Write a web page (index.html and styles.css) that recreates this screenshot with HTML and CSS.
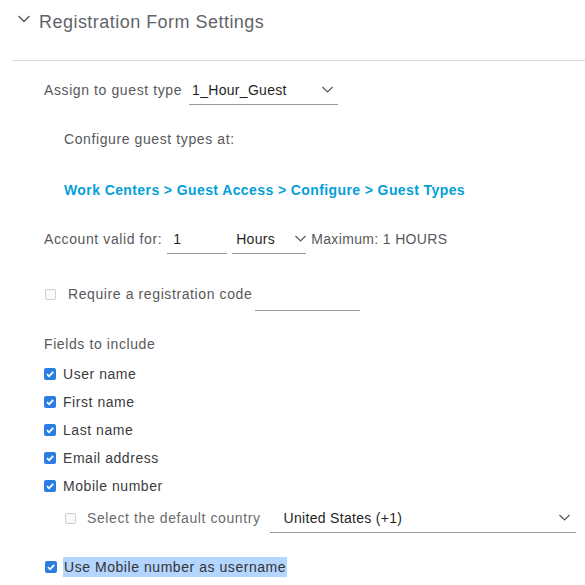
FILE: index.html
```html
<!DOCTYPE html>
<html>
<head>
<meta charset="utf-8">
<link rel="stylesheet" href="styles.css">
</head>
<body>
<div class="panel">
  <div class="header">
    <svg class="caret" width="12" height="8" viewBox="0 0 12 8"><path d="M0.5 1 L6 6.5 L11.5 1" fill="none" stroke="#58585b" stroke-width="1.4"/></svg>
    <span class="title">Registration Form Settings</span>
  </div>
  <div class="content">
    <div class="row r-assign">
      <span class="label">Assign to guest type</span>
      <div class="select sel-guest"><span class="value">1_Hour_Guest</span><svg class="chev" width="11" height="7" viewBox="0 0 11 7"><path d="M0.5 1 L5.5 6 L10.5 1" fill="none" stroke="#58585b" stroke-width="1.2"/></svg></div>
    </div>
    <div class="row r-config indent"><span class="label">Configure guest types at:</span></div>
    <div class="row r-link indent"><span class="link">Work Centers &gt; Guest Access &gt; Configure &gt; Guest Types</span></div>
    <div class="row r-account">
      <span class="label">Account valid for:</span>
      <div class="input in-num"><span class="value">1</span></div>
      <div class="select sel-hours"><span class="value">Hours</span><svg class="chev" width="11" height="7" viewBox="0 0 11 7"><path d="M0.5 1 L5.5 6 L10.5 1" fill="none" stroke="#58585b" stroke-width="1.2"/></svg></div>
      <span class="label max">Maximum: 1 HOURS</span>
    </div>
    <div class="row r-require">
      <span class="cb off"></span>
      <span class="label lbl-req">Require a registration code</span>
      <div class="input in-code"></div>
    </div>
    <div class="row r-fields"><span class="label">Fields to include</span></div>
    <div class="row check"><span class="cb on"><svg width="12" height="12" viewBox="0 0 12 12"><path d="M3 6.2 L5.1 8.3 L9.2 3.8" fill="none" stroke="#fff" stroke-width="1.8"/></svg></span><span class="clabel">User name</span></div>
    <div class="row check"><span class="cb on"><svg width="12" height="12" viewBox="0 0 12 12"><path d="M3 6.2 L5.1 8.3 L9.2 3.8" fill="none" stroke="#fff" stroke-width="1.8"/></svg></span><span class="clabel">First name</span></div>
    <div class="row check"><span class="cb on"><svg width="12" height="12" viewBox="0 0 12 12"><path d="M3 6.2 L5.1 8.3 L9.2 3.8" fill="none" stroke="#fff" stroke-width="1.8"/></svg></span><span class="clabel">Last name</span></div>
    <div class="row check"><span class="cb on"><svg width="12" height="12" viewBox="0 0 12 12"><path d="M3 6.2 L5.1 8.3 L9.2 3.8" fill="none" stroke="#fff" stroke-width="1.8"/></svg></span><span class="clabel">Email address</span></div>
    <div class="row check"><span class="cb on"><svg width="12" height="12" viewBox="0 0 12 12"><path d="M3 6.2 L5.1 8.3 L9.2 3.8" fill="none" stroke="#fff" stroke-width="1.8"/></svg></span><span class="clabel">Mobile number</span></div>
    <div class="row r-country">
      <span class="cb off"></span>
      <span class="label lbl-country">Select the default country</span>
      <div class="select sel-country"><span class="value">United States (+1)</span><svg class="chev" width="11" height="7" viewBox="0 0 11 7"><path d="M0.5 1 L5.5 6 L10.5 1" fill="none" stroke="#58585b" stroke-width="1.2"/></svg></div>
    </div>
    <div class="row r-last"><span class="cb on"><svg width="12" height="12" viewBox="0 0 12 12"><path d="M3 6.2 L5.1 8.3 L9.2 3.8" fill="none" stroke="#fff" stroke-width="1.8"/></svg></span><span class="clabel hl">Use Mobile number as username</span></div>
  </div>
</div>
</body>
</html>
```

FILE: styles.css
```css
html, body { margin: 0; padding: 0; background: #fff; }
body {
  font-family: "Liberation Sans", Arial, sans-serif;
  font-size: 14px;
  color: #58585b;
}
.panel { margin-left: 12px; }
.header {
  height: 61px;
  box-sizing: border-box;
  border-bottom: 1px solid #dcdcdc;
  display: flex;
  align-items: flex-start;
  padding: 11px 0 0 6px;
}
.caret { margin-top: 4px; }
.title {
  margin-left: 9px;
  font-size: 18px;
  line-height: 22px;
  color: #626469;
  letter-spacing: 0.47px;
}
.content { padding-left: 32px; }
.row { display: flex; align-items: center; height: 20px; }
.label { line-height: 20px; letter-spacing: 0.6px; }
.indent { padding-left: 20px; }
.value { color: #1f1f1f; letter-spacing: 0.3px; }
.select, .input {
  box-sizing: border-box;
  border-bottom: 1px solid #9a9a9a;
  display: flex;
  align-items: center;
}
.chev { margin-left: auto; flex: none; }
.r-assign { margin-top: 14px; height: 30px; }
.sel-guest { width: 149px; height: 29px; margin-left: 7px; padding: 0 5px 0 3px; }
.r-config { margin-top: 24px; }
.r-link { margin-top: 31px; }
.link { color: #049fd9; font-weight: bold; letter-spacing: 0.4px; }
.r-account { margin-top: 24px; height: 30px; }
.in-num { width: 60px; height: 30px; margin-left: 5px; padding-left: 6px; }
.sel-hours { width: 74px; height: 30px; margin-left: 5px; padding: 0 0 0 4px; }
.max { margin-left: 5px; letter-spacing: 0.35px; }
.r-require { margin-top: 30px; align-items: flex-start; height: 27px; }
.r-require .cb { margin-top: 5px; margin-left: 1px; }
.lbl-req { margin-left: 12px; }
.in-code { width: 105px; height: 27px; margin-left: 3px; }
.r-fields { margin-top: 23px; }
.check { margin-top: 8px; }
.r-fields + .check { margin-top: 10px; }
.cb {
  flex: none;
  width: 12px; height: 12px;
  box-sizing: border-box;
  border-radius: 2px;
  display: inline-block;
}
.cb svg { display: block; }
.cb.on { background: #2b7de1; }
.cb.off { width: 11px; height: 11px; border: 1px solid #cfcfcf; background: #fafafa; }
.clabel { margin-left: 7px; color: #3b3b3e; letter-spacing: 0.55px; line-height: 20px; }
.r-country { margin-top: 7px; height: 30px; }
.r-country .cb { margin-left: 21px; }
.lbl-country { margin-left: 11px; color: #6b6b6e; }
.sel-country { flex: none; width: 306px; height: 30px; margin-left: 9px; padding: 0 6px 0 14px; }
.r-last { margin-top: 24px; }
.r-last .cb { margin-left: 1px; }
.r-last .clabel { margin-left: 6px; }
.hl { background: #b4d5fe; color: #333; padding: 0 1px; }
```
